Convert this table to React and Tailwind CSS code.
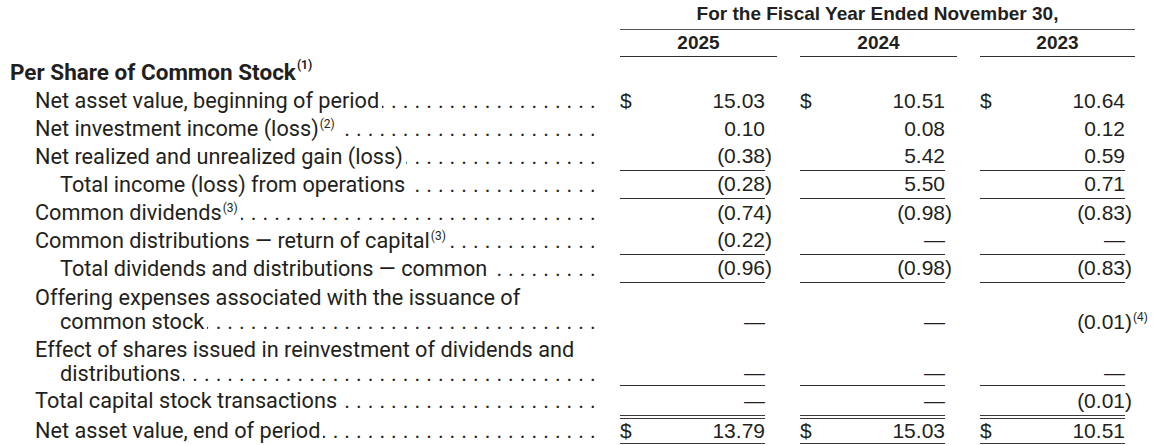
import React from "react";

const rows = [
  { label: "Net asset value, beginning of period", vals: ["15.03", "10.51", "10.64"], dollar: true },
  { label: "Net investment income (loss)", sup: "(2)", vals: ["0.10", "0.08", "0.12"] },
  { label: "Net realized and unrealized gain (loss)", vals: ["(0.38)", "5.42", "0.59"], line: "single" },
  { label: "Total income (loss) from operations", indent: true, vals: ["(0.28)", "5.50", "0.71"], line: "single" },
  { label: "Common dividends", sup: "(3)", vals: ["(0.74)", "(0.98)", "(0.83)"] },
  { label: "Common distributions — return of capital", sup: "(3)", vals: ["(0.22)", "—", "—"], line: "single" },
  { label: "Total dividends and distributions — common", indent: true, vals: ["(0.96)", "(0.98)", "(0.83)"], line: "single" },
  {
    first: "Offering expenses associated with the issuance of",
    label: "common stock",
    indent: true,
    vals: ["—", "—", "(0.01)"],
    valSup: [null, null, "(4)"],
  },
  {
    first: "Effect of shares issued in reinvestment of dividends and",
    label: "distributions",
    indent: true,
    vals: ["—", "—", "—"],
    line: "single",
  },
  // double rule under this one, row is a bit taller
  { label: "Total capital stock transactions", vals: ["—", "—", "(0.01)"], line: "double", kind: "tall" },
  { label: "Net asset value, end of period", vals: ["13.79", "15.03", "10.51"], dollar: true, line: "double", kind: "end" },
];

const colW = ["w-[157px]", "w-[157px]", "w-[155px]"];
const DOTS = ". ".repeat(70);

function Leader() {
  return (
    <span className="flex-1 min-w-0 overflow-hidden flex justify-end ml-[3px]">
      <span className="shrink-0 whitespace-nowrap tracking-[0.3px]">{DOTS}</span>
    </span>
  );
}

function Sup({ children }) {
  return (
    <span className="relative top-[-8px] text-[12px] leading-none ml-[1px]">{children}</span>
  );
}

function Cell({ v, sup, dollar, line, w, lh }) {
  const tail = v.endsWith(")") ? ")" : "";
  const main = tail ? v.slice(0, -1) : v;
  const border =
    line === "single"
      ? "border-b border-[#2e2e2e]"
      : line === "double"
      ? "border-b-[4px] border-double border-[#3a3a3a]"
      : "";
  const ghost =
    line === "single"
      ? "border-b border-transparent"
      : line === "double"
      ? "border-b-[4px] border-transparent"
      : "";
  return (
    <div className={`flex self-stretch ${w}`}>
      <div className={`w-[145px] shrink-0 flex justify-between items-end ${border}`}>
        <span className={lh}>{dollar ? "$" : ""}</span>
        <span className={lh}>{main}</span>
      </div>
      <div className={`flex items-end whitespace-nowrap ${ghost}`}>
        <span className={lh}>
          {tail}
          {sup && <Sup>{sup}</Sup>}
        </span>
      </div>
    </div>
  );
}

function Row({ r }) {
  const pad = r.indent ? "pl-[60px]" : "pl-[35px]";
  let h = "h-[28px]";
  let lh = "leading-[28px]";
  let labelPad = "";
  if (r.first) {
    h = "h-[52px]";
    lh = "leading-[24px]";
    labelPad = "pb-[1px]";
  } else if (r.kind === "tall") {
    h = "h-[32px]";
    labelPad = "pb-[4px]";
  } else if (r.kind === "end") {
    lh = "leading-[24px]";
    labelPad = "pb-[4px]";
  }
  return (
    <div className={`flex ${h}`}>
      <div className="w-[620px] pr-[24px] flex flex-col justify-end font-['Roboto',sans-serif] text-[21.7px]">
        {r.first && (
          <div className="pl-[35px] leading-[24px] whitespace-nowrap">{r.first}</div>
        )}
        <div className={`flex items-end ${pad} ${lh} ${labelPad}`}>
          <span className="whitespace-nowrap">
            {r.label}
            {r.sup && <Sup>{r.sup}</Sup>}
          </span>
          <Leader />
        </div>
      </div>
      <div className={`flex gap-[23px] font-['Liberation_Sans',Arial,sans-serif] text-[21px] ${r.first ? "pb-[1px]" : ""}`}>
        {r.vals.map((v, i) => (
          <Cell
            key={i}
            v={v}
            sup={r.valSup ? r.valSup[i] : null}
            dollar={r.dollar}
            line={r.line}
            w={colW[i]}
            lh={lh}
          />
        ))}
      </div>
    </div>
  );
}

export default function App() {
  return (
    <div className="w-[1154px] h-[445px] overflow-hidden bg-white text-[#231f20]">
      {/* column headings */}
      <div className="flex font-['Liberation_Sans',Arial,sans-serif] font-bold text-[19px]">
        <div className="w-[620px]" />
        <div className="w-[515px]">
          <div className="h-[30px] border-b border-[#555] flex items-center justify-center">
            For the Fiscal Year Ended November 30,
          </div>
          <div className="flex gap-[23px]">
            {["2025", "2024", "2023"].map((y, i) => (
              <div
                key={y}
                className={`${colW[i]} h-[27px] border-b border-[#2e2e2e] flex items-center justify-center`}
              >
                {y}
              </div>
            ))}
          </div>
        </div>
      </div>

      <div className="mt-[2px] h-[28px] pl-[10px] flex items-center font-['Roboto',sans-serif] font-bold text-[22.5px]">
        Per Share of Common Stock
        <Sup>(1)</Sup>
      </div>

      {rows.map((r, i) => (
        <Row key={i} r={r} />
      ))}
    </div>
  );
}
